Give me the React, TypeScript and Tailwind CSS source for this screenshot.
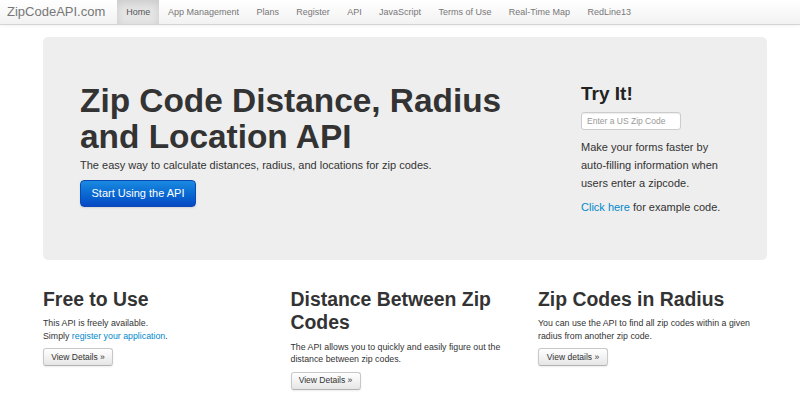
import React from "react";

const navItems = [
  "App Management",
  "Plans",
  "Register",
  "API",
  "JavaScript",
  "Terms of Use",
  "Real-Time Map",
  "RedLine13",
];

function DetailsButton({ label }: { label: string }) {
  return (
    <button className="flex h-[18px] w-[70px] items-center justify-center rounded-[3px] border border-[#c8c8c8] border-b-[#b3b3b3] bg-gradient-to-b from-white to-[#e6e6e6] text-[8.5px] text-[#333] shadow-[0_1px_2px_rgba(0,0,0,0.08)]">
      {label}
    </button>
  );
}

export default function App() {
  return (
    <div className="h-[397px] w-[800px] overflow-hidden bg-white font-['Liberation_Sans',Arial,sans-serif] text-[#333]">
      {/* Navbar */}
      <nav className="flex h-[25px] items-stretch border-b border-[#d4d4d4] bg-gradient-to-b from-white to-[#f2f2f2] shadow-[0_1px_3px_rgba(0,0,0,0.06)]">
        <a className="pl-[7px] pr-[12px] text-[13px] leading-[24px] text-[#777]">ZipCodeAPI.com</a>
        <a className="bg-[#e5e5e5] px-[9px] text-[9px] leading-[24px] text-[#555] shadow-[inset_0_3px_8px_rgba(0,0,0,0.12)]">
          Home
        </a>
        {navItems.map((item) => (
          <a key={item} className="px-[8.7px] text-[9px] leading-[24px] text-[#777]">
            {item}
          </a>
        ))}
      </nav>

      {/* Jumbotron */}
      <div className="ml-[43px] mt-[12px] flex h-[223px] w-[724px] rounded-[5px] bg-[#eeeeee] px-[37px] pt-[46px]">
        <div className="flex-1">
          <h1 className="text-[33.4px] font-bold leading-[36px] text-[#333]">
            Zip Code Distance, Radius
            <br />
            and Location API
          </h1>
          <p className="mt-[3px] text-[11px] leading-[15px] text-[#333]">
            The easy way to calculate distances, radius, and locations for zip codes.
          </p>
          <button className="mt-[7px] flex h-[27px] w-[116px] items-center justify-center rounded-[4px] border border-[#0a4ab8] bg-gradient-to-b from-[#1b8ae0] to-[#0848c4] text-[11px] text-white shadow-[0_1px_2px_rgba(0,0,0,0.1)]">
            Start Using the API
          </button>
        </div>
        <div className="w-[149px]">
          <h2 className="text-[19px] font-bold leading-[21px] text-[#222]">Try It!</h2>
          <input
            className="mt-[8px] block h-[18px] w-[100px] rounded-[3px] border border-[#ccc] bg-white px-[5px] text-[8.5px] text-[#555] shadow-[inset_0_1px_1px_rgba(0,0,0,0.075)] outline-none placeholder:text-[#999]"
            placeholder="Enter a US Zip Code"
          />
          <p className="mt-[8px] text-[11px] leading-[18px] text-[#333]">
            Make your forms faster by auto-filling information when users enter a zipcode.
          </p>
          <p className="mt-[6px] text-[11px] leading-[18px] text-[#333]">
            <a className="text-[#0088cc]">Click here</a> for example code.
          </p>
        </div>
      </div>

      {/* Three columns */}
      <div className="ml-[43px] mt-[28px] grid grid-cols-[228px_228px_228px] gap-x-[19.5px]">
        <div>
          <h2 className="text-[19.4px] font-bold leading-[23.3px] text-[#333]">Free to Use</h2>
          <p className="mt-[6px] text-[8.8px] leading-[12.5px] text-[#333]">
            This API is freely available.
            <br />
            Simply <a className="text-[#0088cc]">register your application</a>.
          </p>
          <div className="mt-[6px]">
            <DetailsButton label="View Details »" />
          </div>
        </div>
        <div>
          <h2 className="text-[19.4px] font-bold leading-[23.3px] text-[#333]">Distance Between Zip Codes</h2>
          <p className="mt-[6px] text-[8.8px] leading-[12.5px] text-[#333]">
            The API allows you to quickly and easily figure out the distance between zip codes.
          </p>
          <div className="mt-[6px]">
            <DetailsButton label="View Details »" />
          </div>
        </div>
        <div>
          <h2 className="text-[19.4px] font-bold leading-[23.3px] text-[#333]">Zip Codes in Radius</h2>
          <p className="mt-[6px] text-[8.8px] leading-[12.5px] text-[#333]">
            You can use the API to find all zip codes within a given radius from another zip code.
          </p>
          <div className="mt-[6px]">
            <DetailsButton label="View details »" />
          </div>
        </div>
      </div>
    </div>
  );
}
